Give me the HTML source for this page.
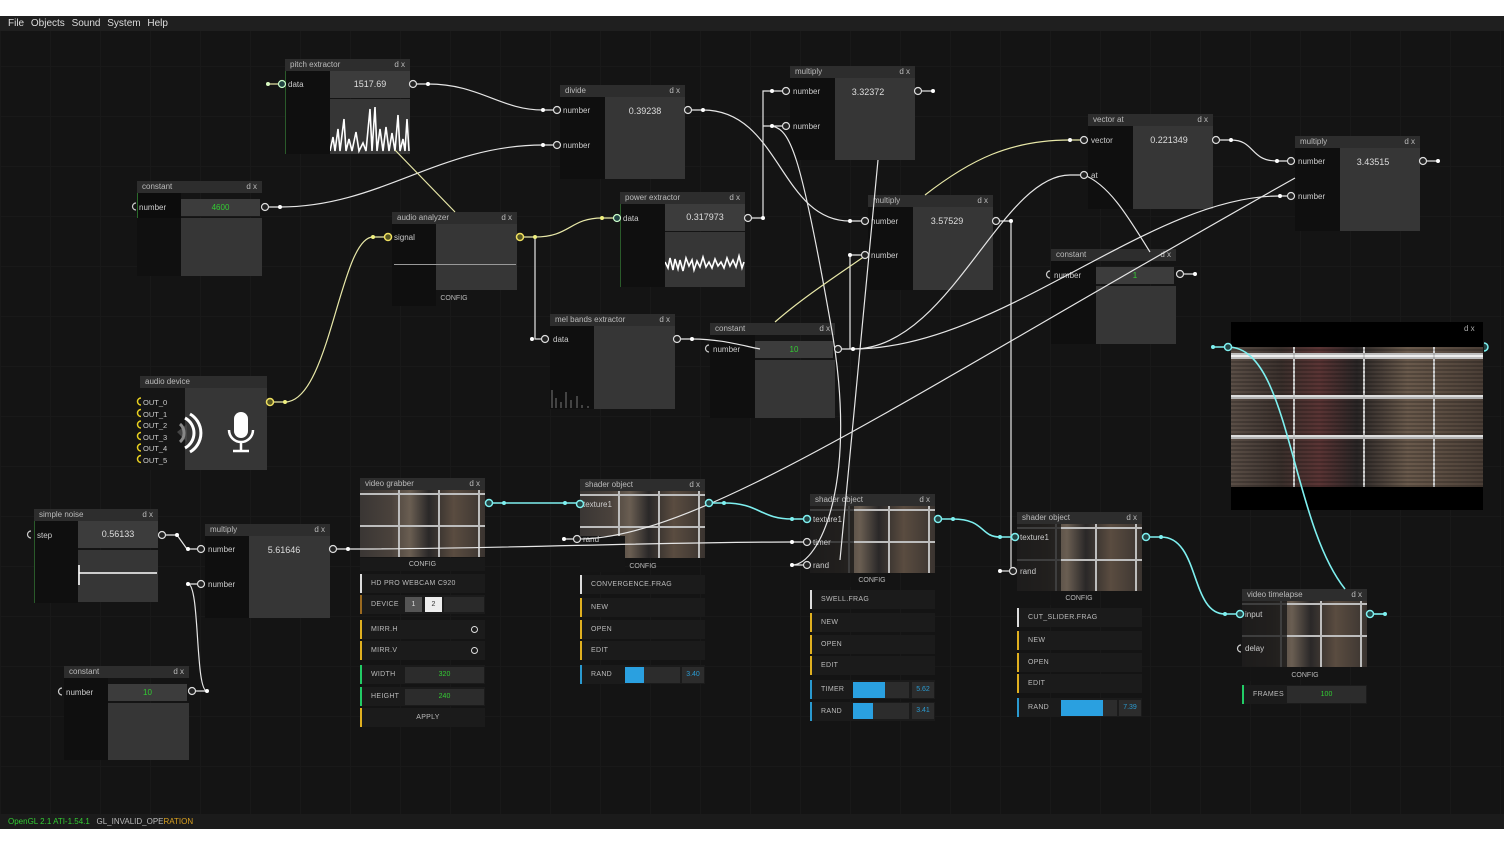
<!DOCTYPE html>
<html><head><meta charset="utf-8"><style>
*{margin:0;padding:0;box-sizing:border-box}
body{width:1504px;height:846px;background:#fff;position:relative;overflow:hidden;font-family:"Liberation Sans","DejaVu Sans",sans-serif}
#bg{position:absolute;left:0;top:16px;width:1504px;height:813px;background:#141414;background-image:linear-gradient(#191919 1px,transparent 1px),linear-gradient(90deg,#191919 1px,transparent 1px);background-size:50px 50px}
#menu{position:absolute;left:0;top:16px;width:1504px;height:15px;background:#1f1f1f;color:#ddd;font-size:10px;line-height:16px;padding-left:8px;word-spacing:4px}
#status{position:absolute;left:0;top:814px;width:1504px;height:15px;background:#1b1b1b;font-size:8px;line-height:15px;padding-left:8px;color:#bbb}
.d{position:absolute}
.t{position:absolute;height:12px;background:#2d2d2d;color:#bbb;font-size:8px;line-height:12px;padding-left:5px}
.t span{position:absolute;right:5px;top:0}
.l{position:absolute;background:#0f0f0f}
.r{position:absolute;background:#363636}
.vb{position:absolute;background:#3c3c3c;color:#ddd;font-size:9px;text-align:center}
.lab{position:absolute;color:#ccc;font-size:8px}
.g{color:#3c3}
.img{position:absolute;background:repeating-linear-gradient(90deg,transparent 0 38px,#bdbdbd 38px 40px),repeating-linear-gradient(0deg,transparent 0 30px,#bdbdbd 30px 32px),linear-gradient(90deg,#3a3634 0,#4a423c 25%,#6a5e52 40%,#2a2828 55%,#5a4c40 75%,#3a3430)}
.row{position:absolute;background:#1b1b1b;color:#bbb;font-size:7px;line-height:19px;padding-left:9px;height:19px;border-left:2px solid #e0b020;letter-spacing:.3px}
.cfg{position:absolute;color:#bbb;font-size:7px;height:13px;line-height:13px;text-align:center;background:#191919}
.sl{position:absolute;background:#2c2c2c}
.sl i{position:absolute;left:0;top:0;bottom:0;background:#2aa0e0}
.sv{position:absolute;background:#2c2c2c;color:#2a9ad0;font-size:7px;text-align:center;line-height:19px}
</style></head><body>
<div id="bg"></div>
<div id="menu">File Objects Sound System Help</div>

<div class="t" style="left:285px;top:59px;width:125px">pitch extractor<span>d x</span></div>
<div class="l" style="left:285px;top:71px;width:45px;height:83px;border-left:1px solid #2a5a2a"></div>
<div class="vb" style="left:330px;top:71px;width:80px;height:27px;line-height:27px">1517.69</div>
<div class="r" style="left:330px;top:99px;width:80px;height:55px"></div>
<svg class="d" style="left:330px;top:99px" width="80" height="55"><path d="M0 52 L3 38 5 52 8 30 10 52 14 20 16 52 19 40 22 52 26 33 29 52 33 44 36 52 40 10 42 52 45 8 47 52 50 30 53 52 56 28 59 52 62 34 65 52 68 16 70 52 73 40 75 52 77 20 79 52" stroke="#fff" stroke-width="1.6" fill="none"/></svg>
<div class="lab" style="left:288px;top:80px">data</div>

<div class="t" style="left:560px;top:85px;width:125px">divide<span>d x</span></div>
<div class="l" style="left:560px;top:97px;width:45px;height:82px"></div>
<div class="r" style="left:605px;top:97px;width:80px;height:82px"></div>
<div class="vb" style="left:605px;top:99px;width:80px;height:24px;line-height:24px;background:none">0.39238</div>
<div class="lab" style="left:563px;top:106px">number</div>
<div class="lab" style="left:563px;top:141px">number</div>

<div class="t" style="left:790px;top:66px;width:125px">multiply<span>d x</span></div>
<div class="l" style="left:790px;top:78px;width:45px;height:82px"></div>
<div class="r" style="left:835px;top:78px;width:80px;height:82px"></div>
<div class="vb" style="left:835px;top:80px;width:66px;height:24px;line-height:24px;background:none">3.32372</div>
<div class="lab" style="left:793px;top:87px">number</div>
<div class="lab" style="left:793px;top:122px">number</div>

<div class="t" style="left:137px;top:181px;width:125px">constant<span>d x</span></div>
<div class="l" style="left:137px;top:193px;width:44px;height:83px;background:#101010"></div>
<div class="l" style="left:137px;top:193px;width:44px;height:25px;border-left:1px solid #2a6a2a;background:#0c0c0c"></div>
<div class="r" style="left:181px;top:218px;width:81px;height:58px"></div>
<div class="vb" style="left:181px;top:199px;width:79px;height:17px;line-height:17px;font-size:8px"><span class="g">4600</span></div>
<div class="lab" style="left:139px;top:203px">number</div>

<div class="t" style="left:392px;top:212px;width:125px">audio analyzer<span>d x</span></div>
<div class="l" style="left:392px;top:224px;width:44px;height:82px"></div>
<div class="r" style="left:436px;top:224px;width:81px;height:66px"></div>
<div class="d" style="left:394px;top:264px;width:122px;height:1px;background:#999"></div>
<div class="cfg" style="left:436px;top:292px;width:36px;background:none">CONFIG</div>
<div class="lab" style="left:394px;top:233px">signal</div>

<div class="t" style="left:620px;top:192px;width:125px">power extractor<span>d x</span></div>
<div class="l" style="left:620px;top:204px;width:45px;height:83px;border-left:1px solid #2a5a2a"></div>
<div class="vb" style="left:665px;top:204px;width:80px;height:27px;line-height:27px">0.317973</div>
<div class="r" style="left:665px;top:232px;width:80px;height:55px"></div>
<svg class="d" style="left:665px;top:250px" width="80" height="30"><path d="M0 12 L3 18 5 8 8 20 10 9 13 19 15 10 18 21 21 8 24 16 27 10 29 20 32 11 35 17 38 7 41 17 44 12 47 18 50 9 53 16 56 12 59 18 62 8 65 16 68 10 71 17 74 6 77 18 79 12" stroke="#fff" stroke-width="1.6" fill="none"/></svg>
<div class="lab" style="left:623px;top:214px">data</div>

<div class="t" style="left:550px;top:314px;width:125px">mel bands extractor<span>d x</span></div>
<div class="l" style="left:550px;top:326px;width:44px;height:83px"></div>
<div class="r" style="left:594px;top:326px;width:81px;height:83px"></div>
<svg class="d" style="left:550px;top:380px" width="50" height="30"><path d="M2 28 V10 M6 28 V18 M11 28 V22 M16 28 V12 M21 28 V20 M27 28 V16 M32 28 V25 M38 28 V26" stroke="#777" stroke-width="1"/></svg>
<div class="lab" style="left:553px;top:335px">data</div>

<div class="t" style="left:710px;top:323px;width:125px">constant<span>d x</span></div>
<div class="l" style="left:710px;top:335px;width:45px;height:83px"></div>
<div class="r" style="left:755px;top:360px;width:80px;height:58px"></div>
<div class="vb" style="left:755px;top:341px;width:78px;height:17px;line-height:17px;font-size:8px"><span class="g">10</span></div>
<div class="lab" style="left:713px;top:345px">number</div>

<div class="t" style="left:868px;top:195px;width:125px">multiply<span>d x</span></div>
<div class="l" style="left:868px;top:207px;width:45px;height:83px"></div>
<div class="r" style="left:913px;top:207px;width:80px;height:83px"></div>
<div class="vb" style="left:913px;top:209px;width:68px;height:24px;line-height:24px;background:none">3.57529</div>
<div class="lab" style="left:871px;top:217px">number</div>
<div class="lab" style="left:871px;top:251px">number</div>

<div class="t" style="left:1088px;top:114px;width:125px">vector at<span>d x</span></div>
<div class="l" style="left:1088px;top:126px;width:45px;height:83px"></div>
<div class="r" style="left:1133px;top:126px;width:80px;height:83px"></div>
<div class="vb" style="left:1133px;top:128px;width:72px;height:24px;line-height:24px;background:none">0.221349</div>
<div class="lab" style="left:1091px;top:136px">vector</div>
<div class="lab" style="left:1091px;top:171px">at</div>

<div class="t" style="left:1295px;top:136px;width:125px">multiply<span>d x</span></div>
<div class="l" style="left:1295px;top:148px;width:45px;height:83px"></div>
<div class="r" style="left:1340px;top:148px;width:80px;height:83px"></div>
<div class="vb" style="left:1340px;top:150px;width:66px;height:24px;line-height:24px;background:none">3.43515</div>
<div class="lab" style="left:1298px;top:157px">number</div>
<div class="lab" style="left:1298px;top:192px">number</div>

<div class="t" style="left:1051px;top:249px;width:125px">constant<span>d x</span></div>
<div class="l" style="left:1051px;top:261px;width:45px;height:83px"></div>
<div class="r" style="left:1096px;top:286px;width:80px;height:58px"></div>
<div class="vb" style="left:1096px;top:267px;width:78px;height:17px;line-height:17px;font-size:8px"><span class="g">1</span></div>
<div class="lab" style="left:1054px;top:271px">number</div>

<div class="d" style="left:1231px;top:322px;width:252px;height:188px;background:#000"></div>
<div class="lab" style="left:1464px;top:324px;color:#aaa">d x</div>
<div class="d" style="left:1231px;top:347px;width:252px;height:140px;background:repeating-linear-gradient(0deg,rgba(0,0,0,.2) 0 2px,transparent 2px 4px),repeating-linear-gradient(90deg,transparent 0 62px,#cfcfcf 62px 64px,transparent 64px 70px),linear-gradient(0deg,transparent 0 48px,#ddd 48px 52px,transparent 52px 88px,#ddd 88px 92px,transparent 92px 128px,#eee 128px 134px,transparent 134px),linear-gradient(90deg,#5a4e46 0,#3a302c 20%,#5a3434 35%,#2a2626 50%,#6a5a4c 70%,#4a3e36 100%)"></div>

<div class="t" style="left:140px;top:376px;width:127px">audio device</div>
<div class="l" style="left:140px;top:388px;width:45px;height:82px;background:#151515"></div>
<div class="r" style="left:185px;top:388px;width:82px;height:82px"></div>
<div class="lab" style="left:143px;top:397px;line-height:11.5px;font-size:7.5px">OUT_0<br>OUT_1<br>OUT_2<br>OUT_3<br>OUT_4<br>OUT_5</div>
<svg class="d" style="left:134px;top:396px" width="10" height="70"><g stroke="#e8d020" stroke-width="1.5" fill="none"><path d="M7 2 A3.5 3.5 0 1 0 7 9"/><path d="M7 13.5 A3.5 3.5 0 1 0 7 20.5"/><path d="M7 25 A3.5 3.5 0 1 0 7 32"/><path d="M7 36.5 A3.5 3.5 0 1 0 7 43.5"/><path d="M7 48 A3.5 3.5 0 1 0 7 55"/><path d="M7 59.5 A3.5 3.5 0 1 0 7 66.5"/></g></svg>
<svg class="d" style="left:175px;top:410px" width="80" height="45"><path d="M2 22 L12 14 V32 Z" fill="#444"/><path d="M5 14 A12 12 0 0 1 5 32" stroke="#888" stroke-width="3" fill="none"/><path d="M10 8 A17 17 0 0 1 10 38" stroke="#fff" stroke-width="3" fill="none"/><path d="M15 4 A22 22 0 0 1 15 42" stroke="#fff" stroke-width="3" fill="none"/><rect x="59" y="2" width="14" height="26" rx="7" fill="#fff"/><path d="M54 20 A12 12 0 0 0 78 20" stroke="#fff" stroke-width="2.5" fill="none"/><path d="M66 32 V40 M58 41 H74" stroke="#fff" stroke-width="2.5"/></svg>

<div class="t" style="left:34px;top:509px;width:124px">simple noise<span>d x</span></div>
<div class="l" style="left:34px;top:521px;width:44px;height:82px;border-left:1px solid #2a5a2a"></div>
<div class="vb" style="left:78px;top:521px;width:80px;height:27px;line-height:27px">0.56133</div>
<div class="r" style="left:78px;top:550px;width:80px;height:52px"></div>
<svg class="d" style="left:78px;top:563px" width="80" height="24"><path d="M1 2 V22 M1 10 H79" stroke="#fff" stroke-width="1.6"/></svg>
<div class="lab" style="left:37px;top:531px">step</div>

<div class="t" style="left:205px;top:524px;width:125px">multiply<span>d x</span></div>
<div class="l" style="left:205px;top:536px;width:44px;height:82px"></div>
<div class="r" style="left:249px;top:536px;width:81px;height:82px"></div>
<div class="vb" style="left:249px;top:538px;width:70px;height:24px;line-height:24px;background:none">5.61646</div>
<div class="lab" style="left:208px;top:545px">number</div>
<div class="lab" style="left:208px;top:580px">number</div>

<div class="t" style="left:64px;top:666px;width:125px">constant<span>d x</span></div>
<div class="l" style="left:64px;top:678px;width:44px;height:82px"></div>
<div class="r" style="left:108px;top:703px;width:81px;height:57px"></div>
<div class="vb" style="left:108px;top:684px;width:79px;height:17px;line-height:17px;font-size:8px"><span class="g">10</span></div>
<div class="lab" style="left:66px;top:688px">number</div>

<div class="t" style="left:360px;top:478px;width:125px">video grabber<span>d x</span></div>
<div class="img" style="left:360px;top:490px;width:125px;height:67px"></div>
<div class="cfg" style="left:360px;top:558px;width:125px">CONFIG</div>
<div class="row" style="left:360px;top:574px;width:125px;border-color:#ddd">HD PRO WEBCAM C920</div>
<div class="row" style="left:360px;top:595px;width:125px;border-color:#9a6a20">DEVICE</div>
<div class="d" style="left:405px;top:597px;width:17px;height:15px;background:#555;color:#ddd;font-size:7px;text-align:center;line-height:15px">1</div>
<div class="d" style="left:425px;top:597px;width:17px;height:15px;background:#eee;color:#333;font-size:7px;text-align:center;line-height:15px">2</div>
<div class="d" style="left:444px;top:597px;width:40px;height:15px;background:#2a2a2a"></div>
<div class="row" style="left:360px;top:620px;width:125px">MIRR.H</div>
<div class="row" style="left:360px;top:641px;width:125px">MIRR.V</div>
<div class="d" style="left:471px;top:626px;width:7px;height:7px;border:1.2px solid #ddd;border-radius:50%"></div>
<div class="d" style="left:471px;top:647px;width:7px;height:7px;border:1.2px solid #ddd;border-radius:50%"></div>
<div class="row" style="left:360px;top:665px;width:125px;border-color:#2c6">WIDTH</div>
<div class="row" style="left:360px;top:687px;width:125px;border-color:#2c6">HEIGHT</div>
<div class="d g" style="left:405px;top:667px;width:79px;height:16px;background:#2c2c2c;font-size:7px;text-align:center;line-height:16px">320</div>
<div class="d g" style="left:405px;top:689px;width:79px;height:16px;background:#2c2c2c;font-size:7px;text-align:center;line-height:16px">240</div>
<div class="row" style="left:360px;top:708px;width:125px;text-align:center">APPLY</div>

<div class="t" style="left:580px;top:479px;width:125px">shader object<span>d x</span></div>
<div class="img" style="left:580px;top:491px;width:125px;height:67px"></div>
<div class="d" style="left:580px;top:536px;width:45px;height:36px;background:#151515"></div>
<div class="cfg" style="left:625px;top:560px;width:36px;background:none">CONFIG</div>
<div class="row" style="left:580px;top:575px;width:125px;border-color:#ddd">CONVERGENCE.FRAG</div>
<div class="row" style="left:580px;top:598px;width:125px">NEW</div>
<div class="row" style="left:580px;top:620px;width:125px">OPEN</div>
<div class="row" style="left:580px;top:641px;width:125px">EDIT</div>
<div class="row" style="left:580px;top:665px;width:125px;border-color:#2a9ad0">RAND</div>
<div class="sl" style="left:625px;top:667px;width:55px;height:16px"><i style="width:19px"></i></div>
<div class="sv" style="left:682px;top:667px;width:22px;height:16px;line-height:16px">3.40</div>
<div class="lab" style="left:583px;top:500px">texture1</div>
<div class="lab" style="left:583px;top:535px">rand</div>

<div class="t" style="left:810px;top:494px;width:125px">shader object<span>d x</span></div>
<div class="img" style="left:810px;top:506px;width:125px;height:67px"></div>
<div class="d" style="left:810px;top:506px;width:44px;height:81px;background:rgba(20,20,20,.75)"></div>
<div class="cfg" style="left:854px;top:574px;width:36px;background:none">CONFIG</div>
<div class="row" style="left:810px;top:590px;width:125px;border-color:#ddd">SWELL.FRAG</div>
<div class="row" style="left:810px;top:613px;width:125px">NEW</div>
<div class="row" style="left:810px;top:635px;width:125px">OPEN</div>
<div class="row" style="left:810px;top:656px;width:125px">EDIT</div>
<div class="row" style="left:810px;top:680px;width:125px;border-color:#2a9ad0">TIMER</div>
<div class="row" style="left:810px;top:702px;width:125px;border-color:#2a9ad0">RAND</div>
<div class="sl" style="left:853px;top:682px;width:56px;height:16px"><i style="width:32px"></i></div>
<div class="sv" style="left:912px;top:682px;width:22px;height:16px;line-height:16px">5.62</div>
<div class="sl" style="left:853px;top:703px;width:56px;height:16px"><i style="width:20px"></i></div>
<div class="sv" style="left:912px;top:703px;width:22px;height:16px;line-height:16px">3.41</div>
<div class="lab" style="left:813px;top:515px">texture1</div>
<div class="lab" style="left:813px;top:538px">timer</div>
<div class="lab" style="left:813px;top:561px">rand</div>

<div class="t" style="left:1017px;top:512px;width:125px">shader object<span>d x</span></div>
<div class="img" style="left:1017px;top:524px;width:125px;height:67px"></div>
<div class="d" style="left:1017px;top:524px;width:44px;height:81px;background:rgba(20,20,20,.75)"></div>
<div class="cfg" style="left:1061px;top:592px;width:36px;background:none">CONFIG</div>
<div class="row" style="left:1017px;top:608px;width:125px;border-color:#ddd">CUT_SLIDER.FRAG</div>
<div class="row" style="left:1017px;top:631px;width:125px">NEW</div>
<div class="row" style="left:1017px;top:653px;width:125px">OPEN</div>
<div class="row" style="left:1017px;top:674px;width:125px">EDIT</div>
<div class="row" style="left:1017px;top:698px;width:125px;border-color:#2a9ad0">RAND</div>
<div class="sl" style="left:1061px;top:700px;width:56px;height:16px"><i style="width:42px"></i></div>
<div class="sv" style="left:1119px;top:700px;width:22px;height:16px;line-height:16px">7.39</div>
<div class="lab" style="left:1020px;top:533px">texture1</div>
<div class="lab" style="left:1020px;top:567px">rand</div>

<div class="t" style="left:1242px;top:589px;width:125px">video timelapse<span>d x</span></div>
<div class="img" style="left:1242px;top:601px;width:125px;height:66px"></div>
<div class="d" style="left:1242px;top:601px;width:45px;height:80px;background:rgba(20,20,20,.75)"></div>
<div class="cfg" style="left:1287px;top:669px;width:36px;background:none">CONFIG</div>
<div class="row" style="left:1242px;top:685px;width:125px;border-color:#2c6;height:19px">FRAMES</div>
<div class="d g" style="left:1287px;top:686px;width:79px;height:17px;background:#2c2c2c;font-size:7px;text-align:center;line-height:17px">100</div>
<div class="lab" style="left:1245px;top:610px">input</div>
<div class="lab" style="left:1245px;top:644px">delay</div>

<svg class="d" style="left:0;top:0" width="1504" height="846" fill="none">
<g stroke="#e6e6e6" stroke-width="1.2">
<path d="M413 84 H428 C480 84 500 110 543 110 H557"/>
<path d="M265 207 H280 C380 207 440 145 543 145 H557"/>
<path d="M688 110 H703 C780 110 780 221 850 221 H865"/>
<path d="M748 218 H763 V91 H786 M763 126 H786"/>
<path d="M918 91 H933"/>
<path d="M535 237 V339 H545"/>
<path d="M677 339 H692 C720 339 740 345 760 349"/>
<path d="M838 349 H853 C950 349 1000 175 1070 175 H1084"/>
<path d="M853 349 C1000 349 1150 195 1280 196 H1291"/>
<path d="M1084 175 C1110 185 1130 220 1150 252"/>
<path d="M1216 140 H1231 C1255 140 1250 161 1277 161 H1291"/>
<path d="M1423 161 H1438"/>
<path d="M1180 274 H1195"/>
<path d="M996 221 H1011 V571 H1013"/>
<path d="M162 535 H177 L187 549 H201"/>
<path d="M192 691 H207 C195 691 200 584 188 584 H201"/>
<path d="M333 549 H348 C500 549 650 542 792 542 H807"/>
<path d="M564 539 H577 C700 539 900 400 1295 178"/>
<path d="M772 126 C790 130 800 150 830 320 860 480 820 565 792 565 H807"/>
<path d="M878 160 C870 250 850 450 840 560"/>
<path d="M850 255 H865 M850 255 V349"/>
<path d="M1000 571 H1015"/>
</g>
<g stroke="#e8e8a8" stroke-width="1.2">
<path d="M268 84 H282"/>
<path d="M270 402 H285 C330 402 340 237 373 237 H388"/>
<path d="M520 237 H535 C570 237 570 218 602 218 H617"/>
<path d="M395 150 L455 212"/>
<path d="M925 195 C970 160 1010 140 1070 140 H1084"/>
<path d="M775 322 C800 300 830 280 865 256"/>
</g>
<g stroke="#7ef0f0" stroke-width="1.6">
<path d="M489 503 H504 H565 H580"/>
<path d="M709 503 H724 C760 503 760 519 792 519 H807"/>
<path d="M938 519 H953 C985 519 980 537 1000 537 H1015"/>
<path d="M1146 537 H1161 C1200 537 1190 614 1225 614 H1240"/>
<path d="M1370 614 H1385"/>
<path d="M1213 347 H1228 C1290 347 1290 520 1345 589"/>
</g>
<g fill="#fff"><circle cx="428" cy="84" r="2"/><circle cx="280" cy="207" r="2"/><circle cx="703" cy="110" r="2"/><circle cx="543" cy="110" r="2"/><circle cx="543" cy="145" r="2"/><circle cx="763" cy="218" r="2"/><circle cx="933" cy="91" r="2"/><circle cx="853" cy="349" r="2"/><circle cx="1231" cy="140" r="2"/><circle cx="1277" cy="161" r="2"/><circle cx="1438" cy="161" r="2"/><circle cx="1195" cy="274" r="2"/><circle cx="1011" cy="221" r="2"/><circle cx="177" cy="535" r="2"/><circle cx="188" cy="549" r="2"/><circle cx="207" cy="691" r="2"/><circle cx="188" cy="584" r="2"/><circle cx="348" cy="549" r="2"/><circle cx="564" cy="539" r="2"/><circle cx="792" cy="542" r="2"/><circle cx="792" cy="565" r="2"/><circle cx="1000" cy="571" r="2"/><circle cx="1084" cy="175" r="2"/><circle cx="1070" cy="140" r="2"/><circle cx="850" cy="221" r="2"/><circle cx="850" cy="255" r="2"/><circle cx="772" cy="91" r="2"/><circle cx="772" cy="126" r="2"/><circle cx="532" cy="339" r="2"/><circle cx="692" cy="339" r="2"/><circle cx="1280" cy="196" r="2"/></g>
<g fill="#d8f8c0"><circle cx="268" cy="84" r="2"/></g>
<g fill="#f0f080"><circle cx="285" cy="402" r="2"/><circle cx="373" cy="237" r="2"/><circle cx="535" cy="237" r="2"/><circle cx="602" cy="218" r="2"/></g>
<g fill="#7ef0f0"><circle cx="504" cy="503" r="2"/><circle cx="565" cy="503" r="2"/><circle cx="724" cy="503" r="2"/><circle cx="792" cy="519" r="2"/><circle cx="953" cy="519" r="2"/><circle cx="1000" cy="537" r="2"/><circle cx="1161" cy="537" r="2"/><circle cx="1225" cy="614" r="2"/><circle cx="1385" cy="614" r="2"/><circle cx="1213" cy="347" r="2"/></g>
<g stroke="#ddd" stroke-width="1.2" fill="#222"><circle cx="413" cy="84" r="3.5"/><circle cx="265" cy="207" r="3.5"/><circle cx="688" cy="110" r="3.5"/><circle cx="557" cy="110" r="3.5"/><circle cx="557" cy="145" r="3.5"/><circle cx="748" cy="218" r="3.5"/><circle cx="786" cy="91" r="3.5"/><circle cx="786" cy="126" r="3.5"/><circle cx="918" cy="91" r="3.5"/><circle cx="838" cy="349" r="3.5"/><circle cx="865" cy="221" r="3.5"/><circle cx="865" cy="255" r="3.5"/><circle cx="996" cy="221" r="3.5"/><circle cx="1084" cy="140" r="3.5"/><circle cx="1084" cy="175" r="3.5"/><circle cx="1216" cy="140" r="3.5"/><circle cx="1291" cy="161" r="3.5"/><circle cx="1291" cy="196" r="3.5"/><circle cx="1423" cy="161" r="3.5"/><circle cx="1180" cy="274" r="3.5"/><circle cx="162" cy="535" r="3.5"/><circle cx="201" cy="549" r="3.5"/><circle cx="201" cy="584" r="3.5"/><circle cx="333" cy="549" r="3.5"/><circle cx="192" cy="691" r="3.5"/><circle cx="577" cy="539" r="3.5"/><circle cx="807" cy="542" r="3.5"/><circle cx="807" cy="565" r="3.5"/><circle cx="1013" cy="571" r="3.5"/><circle cx="677" cy="339" r="3.5"/><circle cx="545" cy="339" r="3.5"/></g>
<g stroke="#ccffcc" stroke-width="1.2" fill="#244"><circle cx="282" cy="84" r="3.5"/><circle cx="617" cy="218" r="3.5"/></g>
<g stroke="#f0e060" stroke-width="1.5" fill="#552"><circle cx="388" cy="237" r="3.5"/><circle cx="520" cy="237" r="3.5"/><circle cx="270" cy="402" r="3.5"/></g>
<g stroke="#7ef0f0" stroke-width="1.5" fill="#244"><circle cx="489" cy="503" r="3.5"/><circle cx="580" cy="504" r="3.5"/><circle cx="709" cy="503" r="3.5"/><circle cx="807" cy="519" r="3.5"/><circle cx="938" cy="519" r="3.5"/><circle cx="1015" cy="537" r="3.5"/><circle cx="1146" cy="537" r="3.5"/><circle cx="1240" cy="614" r="3.5"/><circle cx="1370" cy="614" r="3.5"/><circle cx="1228" cy="347" r="3.5"/><path d="M1484 343 A4 4 0 1 1 1484 351"/></g>
<g stroke="#ccc" stroke-width="1.2"><path d="M136 203 A3.5 3.5 0 1 0 136 210"/><path d="M1050 271 A3.5 3.5 0 1 0 1050 278"/><path d="M709 345 A3.5 3.5 0 1 0 709 352"/><path d="M31 531 A3.5 3.5 0 1 0 31 538"/><path d="M62 688 A3.5 3.5 0 1 0 62 695"/><path d="M1241 645 A3.5 3.5 0 1 0 1241 652"/></g>
</svg>

<div id="status"><span style="color:#3c3">OpenGL 2.1 ATI-1.54.1</span>&nbsp;&nbsp; GL_INVALID_OPE<span style="color:#d9a020">RATION</span></div>
</body></html>
